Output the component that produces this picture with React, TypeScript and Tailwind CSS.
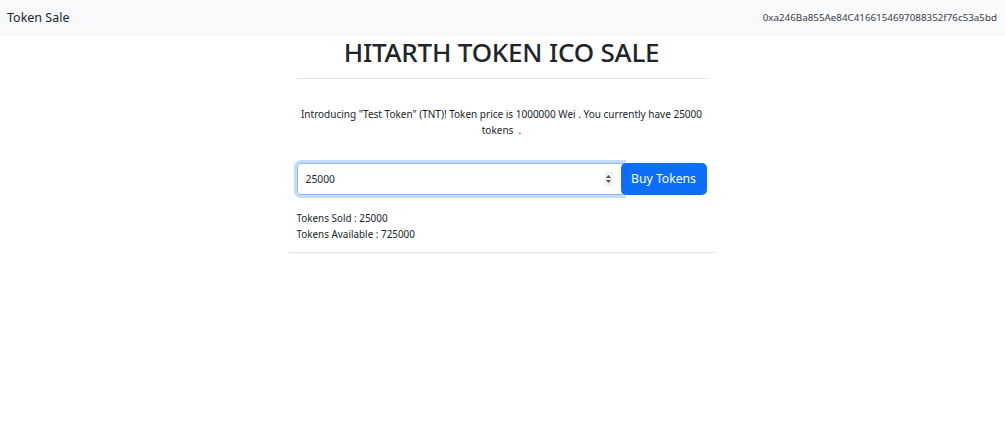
import React, { useState } from 'react';

const font = { fontFamily: '"Noto Sans", "Open Sans", sans-serif' };

const App = () => {
  const [amount, setAmount] = useState('25000');

  return (
    <div className="min-h-screen bg-white text-[#212529]" style={font}>
      <nav className="h-9 bg-[#f8f9fa] flex items-center justify-between pl-[7px] pr-2">
        <span className="text-[12.5px]">Token Sale</span>
        <span className="text-[9.8px] text-[#3b4046]">0xa246Ba855Ae84C4166154697088352f76c53a5bd</span>
      </nav>

      <div className="mx-auto w-[426px] -translate-x-[1px]">
        <div className="px-2">
          <h1 className="text-center text-[26px] font-medium leading-[32px] tracking-[-0.2px]">
            HITARTH TOKEN ICO SALE
          </h1>
          <hr className="mt-[10px] border-t border-[#e2e3e5]" />
          <p className="text-center text-[10px] leading-4 mt-[27px]">
            Introducing "Test Token" (TNT)! Token price is 1000000 Wei . You currently have 25000 tokens&nbsp; .
          </p>

          <div className="flex mt-[25px]">
            <div className="relative flex-1 flex">
              <input
                type="number"
                value={amount}
                onChange={(e) => setAmount(e.target.value)}
                className="flex-1 h-8 px-2 text-[10.3px] border border-[#86b7fe] rounded-l-[4px] outline-none shadow-[0_0_0_3px_rgba(13,110,253,0.25)] [appearance:textfield] [&::-webkit-inner-spin-button]:appearance-none [&::-webkit-outer-spin-button]:appearance-none"
              />
              {/* spinner shown on hover in the screenshot */}
              <div className="absolute right-[10px] top-[9px] w-[8px] h-[14px] bg-[#f0f0f0] flex flex-col items-center justify-center gap-[2px] pointer-events-none">
                <svg width="5" height="3" viewBox="0 0 5 3"><path d="M0 3 L2.5 0 L5 3 Z" fill="#555" /></svg>
                <svg width="5" height="3" viewBox="0 0 5 3"><path d="M0 0 L2.5 3 L5 0 Z" fill="#555" /></svg>
              </div>
            </div>
            <button className="h-8 -ml-[2px] relative w-[86px] bg-[#0d6efd] text-white text-[12.2px] rounded-[5px] pt-[1px]">
              Buy Tokens
            </button>
          </div>

          <div className="mt-[15px] text-[9.9px] leading-4">
            <div>Tokens Sold : 25000</div>
            <div>Tokens Available : 725000</div>
          </div>
        </div>
        <hr className="mt-[10px] border-t border-[#dee2e6]" />
      </div>
    </div>
  );
};

export default App;
